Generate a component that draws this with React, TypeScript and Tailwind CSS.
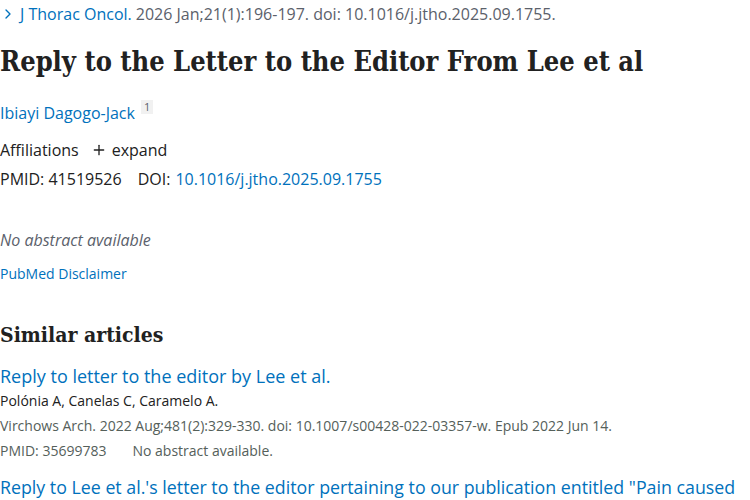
import { ChevronRight, Plus } from 'lucide-react';

const sans = "font-['Open_Sans',sans-serif]";
const serif = "font-['DejaVu_Serif_Condensed','DejaVu_Serif',serif]";

export default function App() {
  return (
    <div className={`w-[750px] h-[500px] overflow-hidden bg-white text-[#212121] ${sans}`}>
      <div className="flex items-center gap-1 pt-[2px] text-[16px] leading-[24px]">
        <ChevronRight className="w-4 h-4 text-[#0071bc]" strokeWidth={2} />
        <span className="text-[#0071bc]">J Thorac Oncol.</span>
        <span className="text-[#5b616b]">2026 Jan;21(1):196-197. doi: 10.1016/j.jtho.2025.09.1755.</span>
      </div>

      <h1 className={`${serif} mt-[18px] text-[27px] leading-[36px] font-bold text-[#212121]`}>
        Reply to the Letter to the Editor From Lee et al
      </h1>

      <div className="mt-[21px] flex items-start text-[16px] leading-[24px]">
        <span className="text-[#0071bc]">Ibiayi Dagogo-Jack</span>
        <span className="ml-[6px] -mt-[1px] bg-[#f1f1f1] px-[3px] text-[11px] leading-[14px] text-[#5b616b]">1</span>
      </div>

      <div className="mt-[13px] flex items-center text-[16px] leading-[24px]">
        <span>Affiliations</span>
        <Plus className="ml-[12px] w-4 h-4" strokeWidth={2} />
        <span className="ml-[5px]">expand</span>
      </div>

      <div className="mt-[5px] flex text-[16px] leading-[24px]">
        <span>PMID: 41519526</span>
        <span className="ml-[16px]">DOI:</span>
        <span className="ml-[5px] text-[#0071bc]">10.1016/j.jtho.2025.09.1755</span>
      </div>

      <p className="mt-[37px] text-[16px] leading-[24px] italic text-[#5b616b]">No abstract available</p>

      <p className="mt-[12px] text-[14px] leading-[20px] text-[#0071bc]">PubMed Disclaimer</p>

      <h2 className={`${serif} mt-[36px] text-[21px] leading-[30px] font-bold`}>Similar articles</h2>

      <div className="mt-[14px]">
        <p className="text-[18px] leading-[24px] text-[#0071bc]">Reply to letter to the editor by Lee et al.</p>
        <p className="mt-[2px] text-[14px] leading-[22px] text-[#212121]">Polónia A, Canelas C, Caramelo A.</p>
        <p className="mt-[3px] text-[14px] leading-[22px] text-[#55605a]">
          Virchows Arch. 2022 Aug;481(2):329-330. doi: 10.1007/s00428-022-03357-w. Epub 2022 Jun 14.
        </p>
        <p className="mt-[3px] flex text-[14px] leading-[22px] text-[#55605a]">
          <span>PMID: 35699783</span>
          <span className="ml-[26px]">No abstract available.</span>
        </p>
      </div>

      <div className="mt-[13px]">
        <p className="whitespace-nowrap text-[17.8px] leading-[24px] text-[#0071bc]">
          Reply to Lee et al.'s letter to the editor pertaining to our publication entitled "Pain caused
        </p>
      </div>
    </div>
  );
}
